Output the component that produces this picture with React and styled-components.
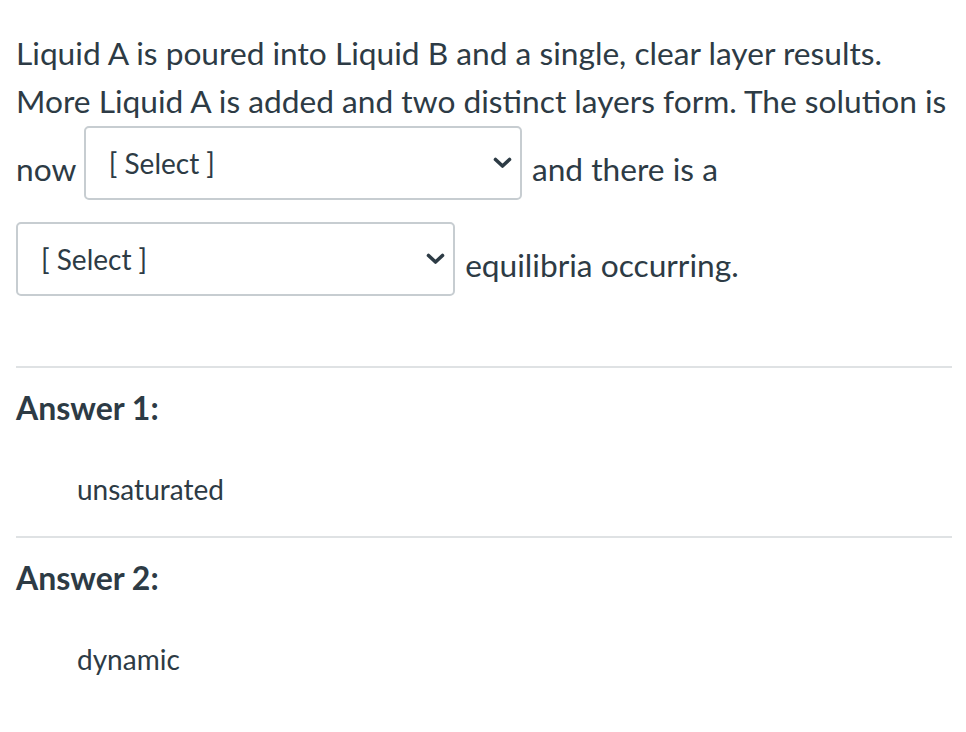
import React from "react";
import styled, { createGlobalStyle } from "styled-components";

const Global = createGlobalStyle`
  html, body { margin: 0; padding: 0; background: #fff; }
  body { font-family: Lato, "Noto Sans", sans-serif; color: #2d3b45; }
`;

const Page = styled.div`
  padding: 29px 14px 0 16px;
`;

const Question = styled.div`
  font-size: 31.7px;
  line-height: 48px;
`;

const Phrase = styled.span``;

const SelectBox = styled.span`
  display: inline-flex;
  align-items: center;
  justify-content: space-between;
  box-sizing: border-box;
  width: ${(p) => p.$w}px;
  height: 74px;
  border: 2px solid #c7cdd1;
  border-radius: 5px;
  padding: 0 8px 0 23px;
  margin: 1px 2px 21px 0;
  vertical-align: middle;
  font-size: 28px;
  line-height: normal;
  background: #fff;
`;

const SelectLabel = styled.span``;

const Divider = styled.hr`
  border: 0;
  border-top: 2px solid #dfe2e4;
  margin: ${(p) => p.$mt}px 0 0;
`;

const Section = styled.section`
  display: flex;
  flex-direction: column;
`;

const AnswerTitle = styled.div`
  font-weight: 700;
  font-size: 32px;
  line-height: 40px;
  margin-top: 20px;
`;

const AnswerText = styled.div`
  font-size: 28px;
  line-height: 36px;
  padding-left: 61px;
  margin: 43px 0 29px;
`;

const Chevron = () => (
  <svg width="19" height="12" viewBox="0 0 19 12">
    <path d="M2.5 2.5 L9.5 9 L16.5 2.5" fill="none" stroke="#2d3b45" strokeWidth="3.6" strokeLinecap="round" strokeLinejoin="round" />
  </svg>
);

export default function App() {
  return (
    <>
      <Global />
      <Page>
        <Question>
          <Phrase>Liquid A is poured into Liquid B and a single, clear layer results.</Phrase>{" "}
          <Phrase>More Liquid A is added and two distinct layers form. The solution is</Phrase>{" "}
          <Phrase>now</Phrase>{" "}
          <SelectBox $w={438}><SelectLabel>[ Select ]</SelectLabel><Chevron /></SelectBox>{" "}
          <Phrase>and there is a</Phrase>{" "}
          <SelectBox $w={439}><SelectLabel>[ Select ]</SelectLabel><Chevron /></SelectBox>{" "}
          <Phrase>equilibria occurring.</Phrase>
        </Question>
        <Divider $mt={49} />
        <Section>
          <AnswerTitle>Answer 1:</AnswerTitle>
          <AnswerText>unsaturated</AnswerText>
        </Section>
        <Divider $mt={0} />
        <Section>
          <AnswerTitle>Answer 2:</AnswerTitle>
          <AnswerText>dynamic</AnswerText>
        </Section>
      </Page>
    </>
  );
}
